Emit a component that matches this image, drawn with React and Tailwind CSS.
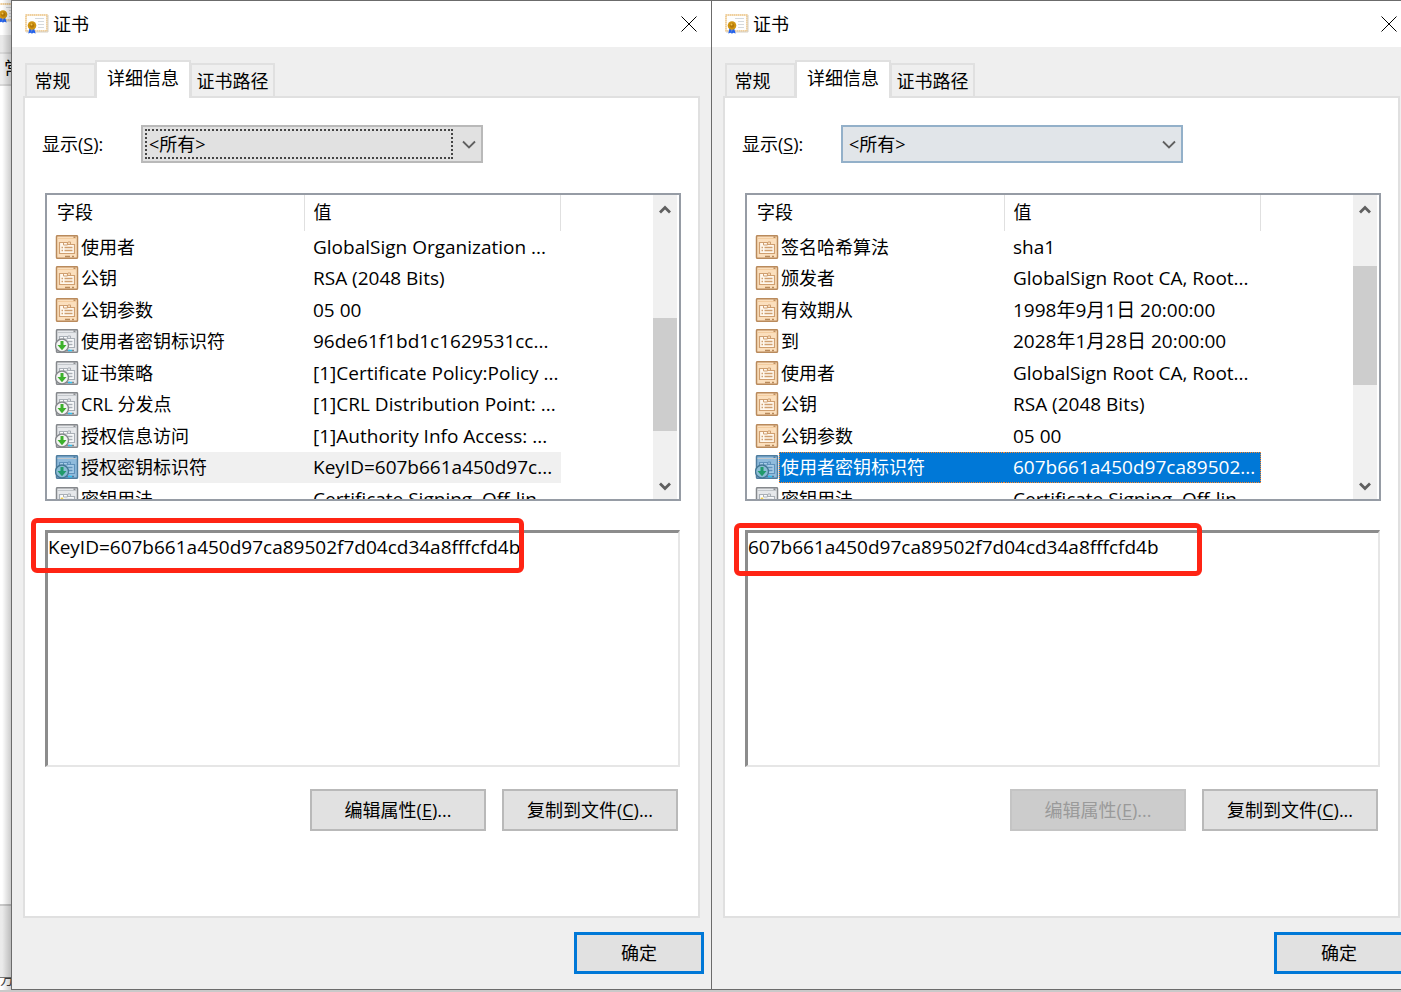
import React from 'react';
import clsx from 'clsx';

const leftFields = [
  { icon: 'v1', field: '使用者', value: 'GlobalSign Organization ...' },
  { icon: 'v1', field: '公钥', value: 'RSA (2048 Bits)' },
  { icon: 'v1', field: '公钥参数', value: '05 00' },
  { icon: 'ext', field: '使用者密钥标识符', value: '96de61f1bd1c1629531cc...' },
  { icon: 'ext', field: '证书策略', value: '[1]Certificate Policy:Policy ...' },
  { icon: 'ext', field: 'CRL 分发点', value: '[1]CRL Distribution Point: ...' },
  { icon: 'ext', field: '授权信息访问', value: '[1]Authority Info Access: ...' },
  { icon: 'ext', field: '授权密钥标识符', value: 'KeyID=607b661a450d97c...' },
  { icon: 'critical', field: '密钥用法', value: 'Certificate Signing, Off-lin...' },
];

const rightFields = [
  { icon: 'v1', field: '签名哈希算法', value: 'sha1' },
  { icon: 'v1', field: '颁发者', value: 'GlobalSign Root CA, Root...' },
  { icon: 'v1', field: '有效期从', value: '1998年9月1日 20:00:00' },
  { icon: 'v1', field: '到', value: '2028年1月28日 20:00:00' },
  { icon: 'v1', field: '使用者', value: 'GlobalSign Root CA, Root...' },
  { icon: 'v1', field: '公钥', value: 'RSA (2048 Bits)' },
  { icon: 'v1', field: '公钥参数', value: '05 00' },
  { icon: 'ext', field: '使用者密钥标识符', value: '607b661a450d97ca89502...' },
  { icon: 'critical', field: '密钥用法', value: 'Certificate Signing, Off-lin...' },
];

// Certificate with a gold seal, used in the title bars
function CertIcon({ className }) {
  return (
    <svg className={clsx('h-5 w-6 shrink-0', className)} viewBox="0 0 24 20">
      <rect x="1" y="1" width="21" height="16" fill="#fefefe" stroke="#f6e2c2" strokeWidth="2" />
      <rect x="1" y="1" width="21" height="16" fill="none" stroke="#e8bd78" strokeWidth="1" strokeDasharray="1 1" />
      <path d="M1 18h22M23 1v17" stroke="#d5cfc4" strokeWidth="1" />
      <path d="M10 4.500h9M13 7.500h6M13 10.500h6M13 13.500h6" stroke="#d5d9dc" strokeWidth="1" />
      <path d="M4.500 14l-1.200 5.500 2.200-.8 1.200 1.100.6-4.800zM9 14l1.700 5.500-2.500-.8-1.200 1.100-.4-4.800z" fill="#2563eb" />
      <circle cx="7" cy="11.500" r="4.300" fill="#cf9410" />
      <circle cx="7" cy="11.500" r="2.200" fill="#b57807" />
      <circle cx="6.500" cy="10.500" r="1" fill="#f0c548" />
    </svg>
  );
}

// Property sheet icon: orange for version 1 fields, grey for extensions
function FieldIcon({ type, selected }) {
  const v1 = type === 'v1';
  const edge = v1 ? '#b98a5c' : selected ? '#4f7d9f' : '#85888c';
  const fill = v1 ? '#fbdfbd' : selected ? '#8fbbdc' : '#e6e8eb';
  const ink = v1 ? '#cf9f70' : selected ? '#5f92bb' : '#a9afb6';
  const paper = v1 ? '#fff8ee' : selected ? '#a8cde8' : '#fafbfc';
  return (
    <svg className="h-6 w-6 shrink-0" viewBox="0 0 24 24">
      <rect x="1.500" y="0.700" width="21" height="22.600" rx="1" fill={fill} stroke={edge} strokeWidth="1.500" />
      <path d="M2.500 3.500h19" stroke={v1 ? '#f3cc9f' : '#c3c7cb'} strokeWidth="1" />
      <path d="M18.500 2.200h2" stroke={edge} strokeWidth="1.500" />
      <path d="M4.500 18.500V7.500h8v2h7v9z" fill={paper} stroke={ink} strokeWidth="1.200" />
      <path d="M8.500 7.500v2.500h4M13 7h2.500v2.500" fill="none" stroke={ink} strokeWidth="1" />
      <path d="M6.500 12.500h1.500M9.500 12.500h8M6.500 15.500h1.500M9.500 15.500h8" stroke={ink} strokeWidth="1.400" />
      <path d="M10 21.500h5M17 21.500h2" stroke={edge} strokeWidth="1.500" />
      {type === 'ext' && (
        <>
          <path d="M13 21.500h4" stroke="#2fc0f0" strokeWidth="1.500" />
          <circle cx="7" cy="16.500" r="6.500" fill={selected ? '#8dbdd6' : '#f4f5f4'} stroke={selected ? '#447794' : '#85888c'} strokeWidth="1.400" />
          <path d="M5.500 12h3v4h3L7 21.200 2.500 16h3z" fill={selected ? '#219a6b' : '#3db12c'} />
        </>
      )}
      {type === 'critical' && <path d="M3 15l4-5 4 5v6H3z" fill="#f3d14a" />}
    </svg>
  );
}

function Tab({ active, className, children }) {
  return (
    <button
      role="tab"
      aria-selected={!!active}
      className={clsx(
        'border-2 border-b-0 border-[#e0e0e0] whitespace-nowrap',
        active ? 'relative z-10 -mx-px -mb-0.5 h-[38px] bg-white pb-1' : 'h-[33px] bg-[#efefef]',
        className
      )}
    >
      {children}
    </button>
  );
}

function PushButton({ disabled, className, children }) {
  return (
    <button
      disabled={disabled}
      className={clsx(
        'h-[42px]',
        disabled ? 'bg-[#cccccc] text-[#9a9a9a]' : 'bg-[#e1e1e1]',
        className
      )}
    >
      {children}
    </button>
  );
}

function ScrollBar({ thumb }) {
  return (
    <div className="mr-0.5 ml-auto flex w-6 flex-col bg-[#f0f0f0]">
      <button aria-label="向上滚动" className="flex h-[30px] items-center justify-center">
        <svg className="h-3 w-3" viewBox="0 0 12 12">
          <path d="M1 8.500L6 3.500l5 5" fill="none" stroke="#606060" strokeWidth="2.800" />
        </svg>
      </button>
      <div className="flex-1">
        <div className={clsx('bg-[#cdcdcd]', thumb)} />
      </div>
      <button aria-label="向下滚动" className="flex h-[26px] items-center justify-center">
        <svg className="h-3 w-3" viewBox="0 0 12 12">
          <path d="M1 3.500l5 5 5-5" fill="none" stroke="#606060" strokeWidth="2.800" />
        </svg>
      </button>
    </div>
  );
}

function FieldList({ fields, focused, thumb }) {
  return (
    <div className="flex h-[308px] overflow-hidden border-2 border-[#969ca5] bg-white">
      <table className="w-[514px] shrink-0 table-fixed self-start text-left">
        <thead>
          <tr className="h-9">
            <th className="w-[257px] border-r border-[#e0e0e0] pb-0.5 pl-2.5 font-normal">字段</th>
            <th className="border-r border-[#e0e0e0] pb-0.5 pl-[9px] font-normal">值</th>
          </tr>
        </thead>
        <tbody>
          {fields.map(({ icon, field, value }, i) => {
            const selected = i === 7;
            const mark = selected && (focused ? 'bg-[#0078d7] text-white' : 'bg-[#f0f0f0]');
            return (
              <tr key={field} className="odd:h-[31px] even:h-8">
                <td className="p-0">
                  <div className="flex h-[31px] items-center pl-2">
                    <FieldIcon type={icon} selected={selected} />
                    <span
                      className={clsx(
                        'flex h-full flex-1 items-center border border-r-0 pl-px whitespace-nowrap',
                        selected && focused ? 'border-dotted border-[#ff8728]' : 'border-transparent',
                        mark
                      )}
                    >
                      {field}
                    </span>
                  </div>
                </td>
                <td className="p-0">
                  <div
                    className={clsx(
                      'flex h-[31px] items-center border border-l-0 pl-[9px] text-[19px] whitespace-nowrap',
                      selected && focused ? 'border-dotted border-[#ff8728]' : 'border-transparent',
                      mark
                    )}
                  >
                    {value}
                  </div>
                </td>
              </tr>
            );
          })}
        </tbody>
      </table>
      <ScrollBar thumb={thumb} />
    </div>
  );
}

function CertDialog({ id, fields, detail, focused, thumb, highlight }) {
  return (
    <section className="relative flex min-w-0 flex-1 flex-col border-t border-b border-l border-[#6b6b6b] bg-[#efefef]">
      <header className="flex h-[46px] items-center bg-white pr-3 pl-[13px]">
        <CertIcon />
        <h1 className="ml-1 flex-1">证书</h1>
        <button aria-label="关闭" className="p-0.5">
          <svg className="h-4 w-4" viewBox="0 0 16 16">
            <path d="M0.500 0.500l15 15M15.500 0.500l-15 15" stroke="#000" strokeWidth="1" />
          </svg>
        </button>
      </header>

      <div className="flex flex-col px-[11px] pt-[13px]">
        <div role="tablist" className="flex items-end pl-0.5">
          <Tab className="w-[71px] pr-4">常规</Tab>
          <Tab active className="w-[96px]">详细信息</Tab>
          <Tab className="w-[85px]">证书路径</Tab>
        </div>

        <div className="flex flex-col border-2 border-[#e0e0e0] bg-white pt-[27px] pr-[17px] pb-[85px] pl-5">
          <div className="flex items-center">
            <label htmlFor={`${id}-show`} className="-ml-[3px] w-[99px]">
              显示(<u className="underline-offset-2">S</u>):
            </label>
            <div
              className={clsx(
                'relative h-[38px] w-[342px] border-2 p-0.5',
                focused ? 'border-[#93b0c9] bg-[#e1e5e9]' : 'border-[#b9b9b9] bg-[#e1e1e1]'
              )}
            >
              <div className={clsx('mr-[26px] h-full border-2', focused ? 'border-transparent' : 'border-dotted border-[#444]')} />
              <select
                id={`${id}-show`}
                className="absolute inset-0 w-full appearance-none bg-transparent pl-1.5 outline-none"
              >
                <option>&lt;所有&gt;</option>
              </select>
              <svg className="pointer-events-none absolute top-3 right-[5px] h-3 w-[14px]" viewBox="0 0 14 12">
                <path d="M1 2.500l6 6 6-6" fill="none" stroke="#606060" strokeWidth="1.800" />
              </svg>
            </div>
          </div>

          <div className="mt-[30px]">
            <FieldList fields={fields} focused={focused} thumb={thumb} />
          </div>

          <div className="relative mt-[29px] mr-px">
            <textarea
              readOnly
              aria-label="值"
              value={detail}
              className="block h-[237px] w-full resize-none border-2 border-t-[3px] border-l-[3px] border-t-[#8c8c8c] border-r-[#e6e6e6] border-b-[#e6e6e6] border-l-[#8c8c8c] bg-white px-0 py-0.5 text-[19px] leading-6 outline-none"
            />
            <div className={clsx('pointer-events-none absolute rounded-md border-[5px] border-[#ff2414]', highlight)} />
          </div>

          <div className="mt-[22px] flex justify-end gap-4 pr-[3px]">
            <PushButton disabled={focused} className={clsx('w-[176px] border-2', focused ? 'border-[#c4c4c4]' : 'border-[#b9b9b9]')}>
              编辑属性(<u className="underline-offset-2">E</u>)...
            </PushButton>
            <PushButton className="w-[176px] border-2 border-[#b9b9b9]">
              复制到文件(<u className="underline-offset-2">C</u>)...
            </PushButton>
          </div>
        </div>
      </div>

      <footer className="flex justify-end pt-[14px] pr-[7px] pb-[15px]">
        <PushButton className="w-[130px] border-[3px] border-[#0078d7]">确定</PushButton>
      </footer>
    </section>
  );
}

// Sliver of the window that sits behind the two dialogs
function BackWindow() {
  return (
    <div className="relative flex w-[11px] shrink-0 flex-col overflow-hidden bg-white">
      <div className="h-[35px] pt-[3px]">
        <CertIcon className="-ml-1" />
      </div>
      <div className="h-[17px] bg-[#e9e9e9]" />
      <div className="h-[34px] border-t-2 border-b-2 border-[#d8d8d8] bg-[#eeeeee] pl-1 leading-7 whitespace-nowrap">常规</div>
      <div className="flex-1" />
      <div className="h-[74px] border-t-2 border-b border-[#c8c8c8] border-b-[#777] bg-[#ebebeb]" />
      <div className="h-3 overflow-hidden text-sm leading-[2px] whitespace-nowrap text-[#444]">方</div>
      <div className="absolute inset-0 bg-linear-to-r from-transparent from-20% to-black/20" />
    </div>
  );
}

export default function App() {
  return (
    <div className="min-h-screen overflow-hidden bg-[#c9c9c9] font-['Open_Sans','Noto_Sans_CJK_SC',sans-serif] text-[18px] leading-6 text-black">
      <div className="-mr-2.5 flex">
        <BackWindow />
        <CertDialog
          id="issuer"
          fields={leftFields}
          detail="KeyID=607b661a450d97ca89502f7d04cd34a8fffcfd4b"
          thumb="mt-[93px] h-[113px]"
          highlight="-top-3 -left-3.5 h-[55px] w-[493px]"
        />
        <CertDialog
          id="root"
          focused
          fields={rightFields}
          detail="607b661a450d97ca89502f7d04cd34a8fffcfd4b"
          thumb="mt-[41px] h-[119px]"
          highlight="-top-[7px] -left-[11px] h-[53px] w-[468px]"
        />
      </div>
    </div>
  );
}
